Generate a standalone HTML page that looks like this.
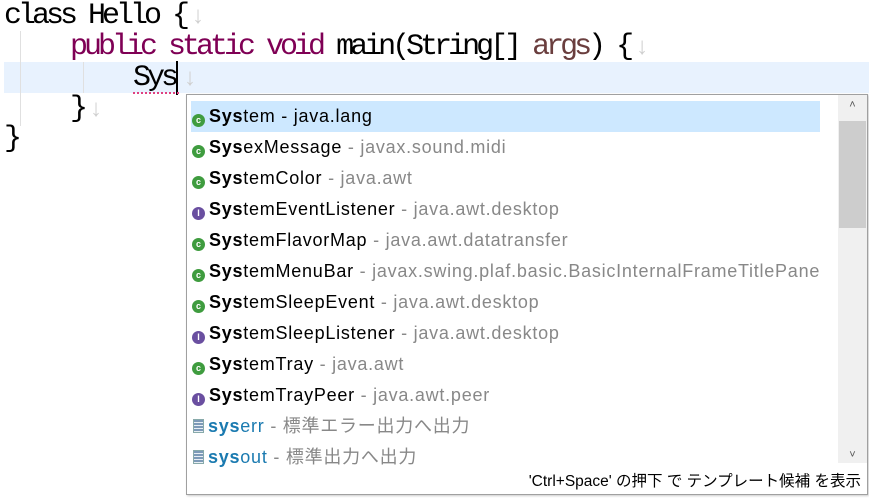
<!DOCTYPE html>
<html><head><meta charset="utf-8"><style>
body{margin:0;width:869px;height:498px;background:#fff;position:relative;overflow:hidden;font-family:"Liberation Sans","Noto Sans CJK JP",sans-serif}
.c{position:absolute;font-family:"Liberation Mono",monospace;font-size:30px;letter-spacing:-4px;white-space:pre;line-height:31px;color:#000}
.k{color:#7f0055}.p{color:#6a3e3e}.g{color:#d0d0d0;font-family:"Liberation Sans",sans-serif;font-size:24px;letter-spacing:0;margin-left:6px}
.hl{position:absolute;left:4px;top:62px;width:865px;height:31px;background:#e8f2fe}
.guide{position:absolute;width:1px;background:#e0e0e0}
.pop{position:absolute;left:186px;top:94px;width:680px;height:399px;border:1px solid #a0a0a0;background:#fff;box-shadow:1px 1px 2px #ccc}
.row{position:absolute;left:4px;height:31px;line-height:31px;font-size:18px;letter-spacing:0.75px;color:#000;white-space:nowrap}
.row b{font-weight:bold}
.row .q{color:#888}
.sel{background:#cde8ff;width:629px}
.ic{display:inline-block;width:13px;height:13px;border-radius:50%;vertical-align:-1px;margin:0 4px 0 1px;color:#fff;font-size:9px;font-weight:bold;text-align:center;line-height:13px;letter-spacing:0}
.cg{background:#3f9c3f}.ci{background:#6a4fa0}
.doc{display:inline-block;width:11px;height:14px;background:repeating-linear-gradient(#7d9ab8 0 2px,#e8eef4 2px 3px);border:1px solid #8aa;vertical-align:-1px;margin:0 4px 0 2px;box-sizing:border-box}
.t{color:#1a7ab0}
.sb{position:absolute;right:0;top:0;width:29px;height:368px;background:#f0f0f0}
.th{position:absolute;left:1px;top:26px;width:27px;height:107px;background:#cdcdcd}
.foot{position:absolute;right:6px;bottom:3px;font-size:15.5px;color:#000;white-space:nowrap}
</style></head><body>
<div class="hl"></div>
<div class="guide" style="left:20px;top:31px;height:95px"></div>
<div class="guide" style="left:83px;top:62px;height:31px"></div>
<div class="c" style="left:4px;top:0">class Hello {<span class="g">↓</span></div>
<div class="c" style="left:70px;top:31px"><span class="k">public static void</span> main(String[] <span class="p">args</span>) {<span class="g">↓</span></div>
<div class="c" style="left:133px;top:62px">Sys<span style="border-left:2px solid #000;margin-left:1px"></span><span class="g">↓</span></div>
<div style="position:absolute;left:133px;top:92px;width:46px;height:2px;background:repeating-linear-gradient(90deg,#e04080 0 2px,transparent 2px 4px)"></div>
<div class="c" style="left:70px;top:93px">}<span class="g">↓</span></div>
<div class="c" style="left:4px;top:124px">}</div>
<div class="pop">
<div class="row sel" style="top:6px"><span class="ic cg">c</span><b>Sys</b>tem - java.lang</div>
<div class="row" style="top:37px"><span class="ic cg">c</span><b>Sys</b>exMessage <span class="q">- javax.sound.midi</span></div>
<div class="row" style="top:68px"><span class="ic cg">c</span><b>Sys</b>temColor <span class="q">- java.awt</span></div>
<div class="row" style="top:99px"><span class="ic ci">I</span><b>Sys</b>temEventListener <span class="q">- java.awt.desktop</span></div>
<div class="row" style="top:130px"><span class="ic cg">c</span><b>Sys</b>temFlavorMap <span class="q">- java.awt.datatransfer</span></div>
<div class="row" style="top:161px"><span class="ic cg">c</span><b>Sys</b>temMenuBar <span class="q">- javax.swing.plaf.basic.BasicInternalFrameTitlePane</span></div>
<div class="row" style="top:192px"><span class="ic cg">c</span><b>Sys</b>temSleepEvent <span class="q">- java.awt.desktop</span></div>
<div class="row" style="top:223px"><span class="ic ci">I</span><b>Sys</b>temSleepListener <span class="q">- java.awt.desktop</span></div>
<div class="row" style="top:254px"><span class="ic cg">c</span><b>Sys</b>temTray <span class="q">- java.awt</span></div>
<div class="row" style="top:285px"><span class="ic ci">I</span><b>Sys</b>temTrayPeer <span class="q">- java.awt.peer</span></div>
<div class="row" style="top:316px"><span class="doc"></span><span class="t"><b>sys</b>err</span> <span class="q">- 標準エラー出力へ出力</span></div>
<div class="row" style="top:347px"><span class="doc"></span><span class="t"><b>sys</b>out</span> <span class="q">- 標準出力へ出力</span></div>
<div class="sb"><div style="position:absolute;top:4px;width:29px;text-align:center;font-size:11px;color:#555">˄</div><div class="th"></div><div style="position:absolute;bottom:2px;width:29px;text-align:center;font-size:11px;color:#555">˅</div></div>
<div class="foot">'Ctrl+Space' の押下 で テンプレート候補 を表示</div>
</div>
</body></html>
